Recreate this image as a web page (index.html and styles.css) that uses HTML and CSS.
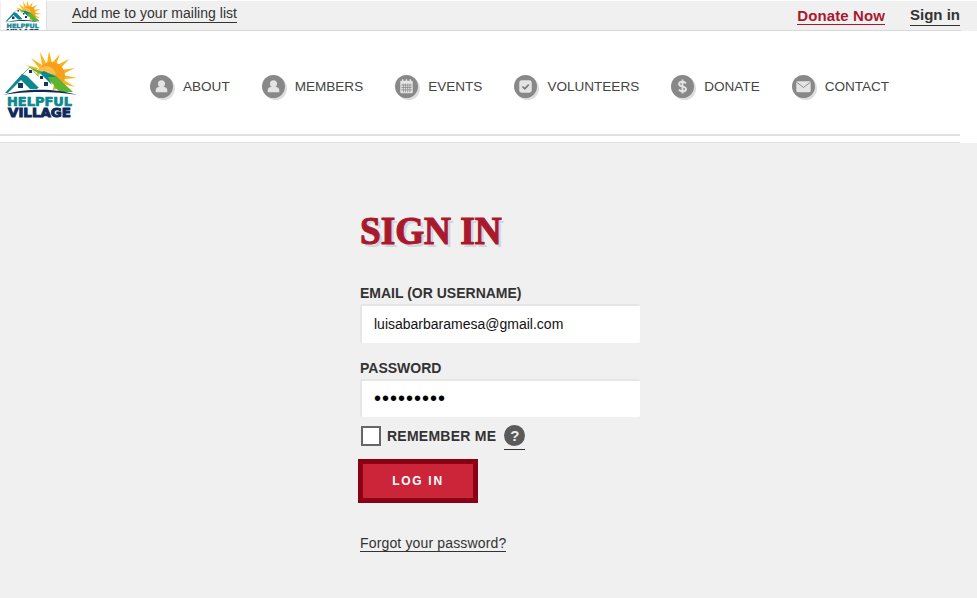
FILE: index.html
```html
<!DOCTYPE html>
<html lang="en">
<head>
    <meta charset="UTF-8">
    <title>Sign in - Helpful Village</title>
    <link rel="stylesheet" href="styles.css">
</head>
<body>
    <svg class="svg-defs" width="0" height="0" aria-hidden="true">
        <defs>
            <symbol id="village-logo" viewBox="0 0 76 66">
                <!-- sun rays -->
                <g fill="#fcb414">
                    <polygon points="38,0 44,11 40,13"/>
                    <polygon points="47,-1 50,11 45,11"/>
                    <polygon points="58,2 54,13 50,11"/>
                    <polygon points="29,6 40,13 37,16"/>
                    <polygon points="67,7 58,17 55,13"/>
                    <polygon points="73,16 61,22 59,18"/>
                    <polygon points="75,26 62,27 61,23"/>
                    <polygon points="73,35 61,32 62,28"/>
                    <polygon points="24,13 36,16 34,19"/>
                </g>
                <circle cx="49" cy="24" r="14" fill="#f8a01e"/>
                <circle cx="44" cy="24" r="10" fill="#fbc04b"/>
                <!-- roofs -->
                <polygon points="28,16 53,23 71,40 58,40 42,25" fill="#5db42f"/>
                <polygon points="20,23 28,15 44,33 30,36" fill="#fff" stroke="#5db42f" stroke-width="0.8"/>
                <polygon points="32,35 38,21 52,33 50,40 32,40" fill="#fff"/>
                <polygon points="38,21 42,19 54,25 46,25 50,33" fill="#0d8790"/>
                <path d="M3 41 L20 22 L36 37 L26 37 L19 30 L6 41 Z" fill="#0d8790"/>
                <polygon points="20,22 25,24 37,36 27,36" fill="#0d8790"/>
                <polygon points="6,41 19,28 30,39 28,40" fill="#fff"/>
                <rect x="16" y="31" width="5" height="5" fill="#14385e"/>
                <rect x="27" y="18" width="3" height="3" fill="#14385e"/>
                <rect x="38" y="24" width="3" height="3" fill="#14385e"/>
                <rect x="42" y="30" width="4" height="4" fill="#14385e"/>
                <path d="M1 43 C 22 36, 54 36, 75 43 C 54 39, 22 39, 1 43 Z" fill="#0c2a5a"/>
                <text class="logo-top" x="5" y="54" textLength="65" lengthAdjust="spacingAndGlyphs">HELPFUL</text>
                <text class="logo-bottom" x="6" y="65" textLength="63" lengthAdjust="spacingAndGlyphs">VILLAGE</text>
            </symbol>
            <symbol id="icon-person" viewBox="0 0 24 24">
                <circle cx="12" cy="9.2" r="3.7" fill="#e4e4e4"/>
                <path d="M6 18v-2.2c0-2 1.6-3.3 3.5-3.3h5c1.900 0 3.500 1.300 3.500 3.300V18z" fill="#e4e4e4"/>
            </symbol>
            <symbol id="icon-calendar" viewBox="0 0 24 24">
                <rect x="5.500" y="6" width="13" height="13" rx="1" fill="#e4e4e4"/>
                <path d="M8 4.500v3M12 4.500v3M16 4.500v3" stroke="#e4e4e4" stroke-width="1.500"/>
                <path d="M6.500 10.500h11M6.500 13h11M6.500 15.500h11M8.700 9v9M11 9v9M13.300 9v9M15.600 9v9" stroke="#888" stroke-width=".8"/>
            </symbol>
            <symbol id="icon-check" viewBox="0 0 24 24">
                <rect x="5.500" y="5.500" width="13" height="13" rx="2.500" fill="#e4e4e4"/>
                <path d="M8.800 12l2.400 2.400 4.200-4.400" fill="none" stroke="#777" stroke-width="1.700"/>
            </symbol>
            <symbol id="icon-dollar" viewBox="0 0 24 24">
                <path d="M15.500 8.800c-.7-1.100-2-1.700-3.500-1.700-2 0-3.500 1-3.500 2.500 0 3.600 7.200 1.600 7.200 5 0 1.500-1.600 2.500-3.700 2.500-1.600 0-3-.7-3.700-1.900M12 4.800v14.400" fill="none" stroke="#e4e4e4" stroke-width="2"/>
            </symbol>
            <symbol id="icon-mail" viewBox="0 0 24 24">
                <rect x="4.500" y="6.500" width="15" height="11.500" rx="1.500" fill="#e4e4e4"/>
                <path d="M4.800 7.500l7.200 5.500 7.200-5.500" fill="none" stroke="#888" stroke-width="1"/>
            </symbol>
        </defs>
    </svg>

    <div class="top-bar">
        <a class="top-logo" href="#">
            <svg width="38" height="33"><use href="#village-logo"/></svg>
        </a>
        <a class="mail-link" href="#">Add me to your mailing list</a>
        <div class="top-actions">
            <a class="donate-link" href="#">Donate Now</a>
            <a class="signin-link" href="#">Sign in</a>
        </div>
    </div>

    <header class="site-header">
        <a class="main-logo" href="#">
            <svg width="76" height="66"><use href="#village-logo"/></svg>
        </a>
        <nav class="main-nav">
            <a class="nav-item" href="#"><span class="nav-icon"><svg width="23" height="23"><use href="#icon-person"/></svg></span>ABOUT</a>
            <a class="nav-item" href="#"><span class="nav-icon"><svg width="23" height="23"><use href="#icon-person"/></svg></span>MEMBERS</a>
            <a class="nav-item" href="#"><span class="nav-icon"><svg width="23" height="23"><use href="#icon-calendar"/></svg></span>EVENTS</a>
            <a class="nav-item" href="#"><span class="nav-icon"><svg width="23" height="23"><use href="#icon-check"/></svg></span>VOLUNTEERS</a>
            <a class="nav-item" href="#"><span class="nav-icon"><svg width="23" height="23"><use href="#icon-dollar"/></svg></span>DONATE</a>
            <a class="nav-item" href="#"><span class="nav-icon"><svg width="23" height="23"><use href="#icon-mail"/></svg></span>CONTACT</a>
        </nav>
    </header>
    <div class="header-gap"></div>

    <main class="page-main">
        <form class="signin-form">
            <h1 class="signin-title">SIGN IN</h1>
            <label class="field-label" for="email">EMAIL (OR USERNAME)</label>
            <input class="text-input" id="email" type="text" value="luisabarbaramesa@gmail.com">
            <label class="field-label" for="password">PASSWORD</label>
            <input class="text-input password-input" id="password" type="password" value="secretpwd">
            <div class="remember-row">
                <span class="check-box"></span>
                <span class="remember-text">REMEMBER ME</span>
                <a class="help-link" href="#"><span class="help-icon">?</span></a>
            </div>
            <button class="login-btn" type="button">LOG IN</button>
            <a class="forgot-link" href="#">Forgot your password?</a>
        </form>
    </main>
</body>
</html>
```

FILE: styles.css
```css
/* base */
* {
    margin: 0;
    padding: 0;
    box-sizing: border-box;
}

html, body {
    height: 100%;
}

body {
    font-family: "Liberation Sans", Arial, sans-serif;
    font-size: 14px;
    color: #333;
    background: #fff;
    overflow: hidden;
}

a {
    color: inherit;
    text-decoration: none;
}

.svg-defs {
    position: absolute;
}

/* top strip */
.top-bar {
    display: flex;
    align-items: flex-start;
    height: 30px;
    margin-top: 1px;
    padding-left: 1px;
    background: #f0f0f0;
    border-bottom: 1px solid #d8d8d8;
    border-image: linear-gradient(to right, #d8d8d8 960px, #f0f0f0 960px) 1;
}

.top-logo {
    display: block;
    width: 46px;
    height: 29px;
    padding-left: 3px;
    overflow: hidden;
    background: #fff;
    border-right: 1px solid #ddd;
}

.top-logo svg {
    display: block;
}

.mail-link {
    margin: 4px 0 0 25px;
    padding-bottom: 1px;
    line-height: 16px;
    letter-spacing: 0.03px;
    border-bottom: 1px solid #333;
}

.top-actions {
    display: flex;
    align-items: flex-start;
    gap: 25px;
    margin-left: auto;
    padding-right: 17px;
    font-size: 15px;
    font-weight: bold;
}

.donate-link {
    margin-top: 7px;
    line-height: 16px;
    letter-spacing: 0.1px;
    color: #a8192e;
    border-bottom: 1px solid #a8192e;
}

.signin-link {
    margin-top: 5px;
    padding-bottom: 2px;
    line-height: 17px;
    border-bottom: 1px solid #333;
}

/* main header */
.site-header {
    display: flex;
    align-items: center;
    width: 960px;
    height: 105px;
    padding-left: 2px;
    border-bottom: 2px solid #e2e2e2;
}

.main-logo {
    display: block;
    width: 76px;
    height: 66px;
    margin-top: 4px;
}

.main-logo svg {
    display: block;
    overflow: visible;
}

.logo-top,
.logo-bottom {
    font-family: "DejaVu Sans", sans-serif;
    font-weight: bold;
}

.logo-top {
    font-size: 12px;
    fill: #0d8790;
    stroke: #0d8790;
    stroke-width: 0.7px;
}

.logo-bottom {
    font-size: 13px;
    fill: #0c2a5a;
    stroke: #0c2a5a;
    stroke-width: 1px;
}

.main-nav {
    display: flex;
    align-items: center;
    gap: 32px;
    margin-left: 72px;
    margin-top: 7px;
    font-size: 13.55px;
    color: #444;
}

.nav-item {
    display: flex;
    align-items: center;
    gap: 10px;
    white-space: nowrap;
}

.nav-icon {
    display: block;
    width: 23px;
    height: 23px;
    border-radius: 50%;
    background: #888;
    box-shadow: 2px 2px 0 #ddd;
}

.nav-icon svg {
    display: block;
}

.header-gap {
    width: 960px;
    height: 7px;
    border-bottom: 1px solid #e2e2e2;
}

/* sign in form */
.page-main {
    height: 455px;
    background: #f0f0f0;
    padding: 68px 0 0 360px;
}

.signin-form {
    display: flex;
    flex-direction: column;
    align-items: flex-start;
    width: 280px;
}

.signin-title {
    font-family: "Liberation Serif", serif;
    font-size: 40px;
    font-weight: bold;
    line-height: 40px;
    color: #a8192e;
    -webkit-text-stroke: 1.2px #a8192e;
    text-shadow: 3px 3px 0 #d4d4dc;
    margin-bottom: 34px;
    transform: scaleX(0.93);
    transform-origin: left center;
}

.field-label {
    font-weight: bold;
    line-height: 16px;
    margin-bottom: 3px;
}

.text-input {
    display: block;
    width: 280px;
    height: 39px;
    margin-bottom: 17px;
    padding: 0 0 1px 12px;
    font-family: "Liberation Sans", Arial, sans-serif;
    font-size: 14px;
    color: #111;
    background: #fff;
    border: none;
    border-top: 2px solid #e6e6e6;
    border-left: 2px solid #e6e6e6;
    border-radius: 2px;
    outline: none;
}

.password-input {
    height: 38px;
    margin-bottom: 8px;
    font-size: 20px;
    letter-spacing: 1px;
    color: #000;
}

.remember-row {
    display: flex;
    align-items: center;
    height: 25px;
    padding-left: 1px;
}

.check-box {
    display: block;
    width: 20px;
    height: 20px;
    background: #fff;
    border: 2px solid #666;
    margin-top: -4px;
}

.remember-text {
    margin: -4px 0 0 6px;
    font-weight: bold;
    letter-spacing: 0.25px;
}

.help-link {
    display: block;
    width: 21px;
    height: 25px;
    margin-left: 8px;
    border-bottom: 1px solid #333;
}

.help-icon {
    display: block;
    width: 21px;
    height: 21px;
    border-radius: 50%;
    background: #5a5a5a;
    color: #eee;
    font-size: 15px;
    font-weight: bold;
    line-height: 21px;
    text-align: center;
}

.login-btn {
    display: block;
    width: 120px;
    height: 44px;
    margin: 9px 0 32px -2px;
    background: #cc2539;
    border: 5px solid #8a0015;
    color: #fff;
    font-family: "Liberation Sans", Arial, sans-serif;
    font-size: 12px;
    font-weight: bold;
    letter-spacing: 1.7px;
    cursor: pointer;
}

.forgot-link {
    line-height: 16px;
    letter-spacing: 0.15px;
    border-bottom: 1px solid #333;
}
```
